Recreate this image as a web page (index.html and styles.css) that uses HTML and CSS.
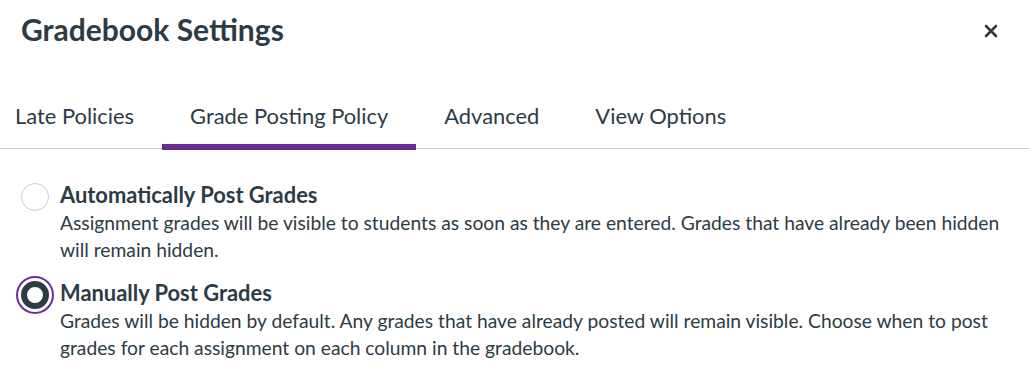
FILE: index.html
```html
<!DOCTYPE html>
<html lang="en">
<head>
<meta charset="utf-8">
<title>Gradebook Settings</title>
<link rel="stylesheet" href="styles.css">
</head>
<body>
<div class="modal">
  <header class="header">
    <h1 class="title">Gradebook Settings</h1>
    <button class="close" aria-label="Close">
      <svg viewBox="0 0 14 14" width="14" height="14" aria-hidden="true">
        <path d="M2 2 L12 12 M12 2 L2 12" stroke="#2D3B45" stroke-width="2.6" stroke-linecap="round"/>
      </svg>
    </button>
  </header>
  <nav class="tabs">
    <div class="tab">Late Policies</div>
    <div class="tab tab-selected">Grade Posting Policy</div>
    <div class="tab">Advanced</div>
    <div class="tab">View Options</div>
  </nav>
  <section class="content">
    <div class="option">
      <span class="radio"></span>
      <div class="option-text">
        <div class="option-label">Automatically Post Grades</div>
        <p class="option-desc">Assignment grades will be visible to students as soon as they are entered. Grades that have already been hidden will remain hidden.</p>
      </div>
    </div>
    <div class="option">
      <span class="radio radio-checked"></span>
      <div class="option-text">
        <div class="option-label">Manually Post Grades</div>
        <p class="option-desc">Grades will be hidden by default. Any grades that have already posted will remain visible. Choose when to post grades for each assignment on each column in the gradebook.</p>
      </div>
    </div>
  </section>
</div>
</body>
</html>
```
FILE: styles.css
```css
html, body {
  margin: 0;
  padding: 0;
  background: #ffffff;
}
body {
  font-family: Lato, "Open Sans", sans-serif;
  color: #2D3B45;
  overflow: hidden;
}
.modal {
  width: 1029px;
}
.header {
  height: 62px;
  box-sizing: border-box;
  display: flex;
  align-items: flex-start;
  justify-content: space-between;
  padding: 14px 31px 0 21px;
}
.title {
  margin: 0;
  font-size: 30px;
  font-weight: 700;
  line-height: 30px;
}
.close {
  border: 0;
  background: none;
  padding: 0;
  margin-top: 10px;
  width: 14px;
  height: 14px;
  display: flex;
}
.tabs {
  display: flex;
  margin-top: 22px;
  margin-left: -13px;
  border-bottom: 1px solid #C7CDD1;
}
.tab {
  position: relative;
  padding: 0 28px;
  height: 64px;
  line-height: 64px;
  font-size: 21.9px;
  white-space: nowrap;
}
.tab-selected::after {
  content: "";
  position: absolute;
  left: 0;
  right: 0;
  bottom: -2px;
  height: 6px;
  background: #6B2D91;
}
.content {
  padding: 32px 18px 0 21px;
}
.option {
  display: flex;
  gap: 11px;
  margin-bottom: 16px;
}
.radio {
  flex: none;
  width: 28px;
  height: 28px;
  margin-top: 2px;
  box-sizing: border-box;
  border-radius: 50%;
  border: 1px solid #C7CDD1;
  background: #ffffff;
}
.radio-checked {
  border: 6.5px solid #2D3B45;
  box-shadow: 0 0 0 3px #ffffff, 0 0 0 5px #6B2D91;
}
.option-label {
  font-size: 21.9px;
  font-weight: 700;
  line-height: 28px;
}
.option-desc {
  margin: 0;
  font-size: 19.25px;
  line-height: 27px;
}
```
